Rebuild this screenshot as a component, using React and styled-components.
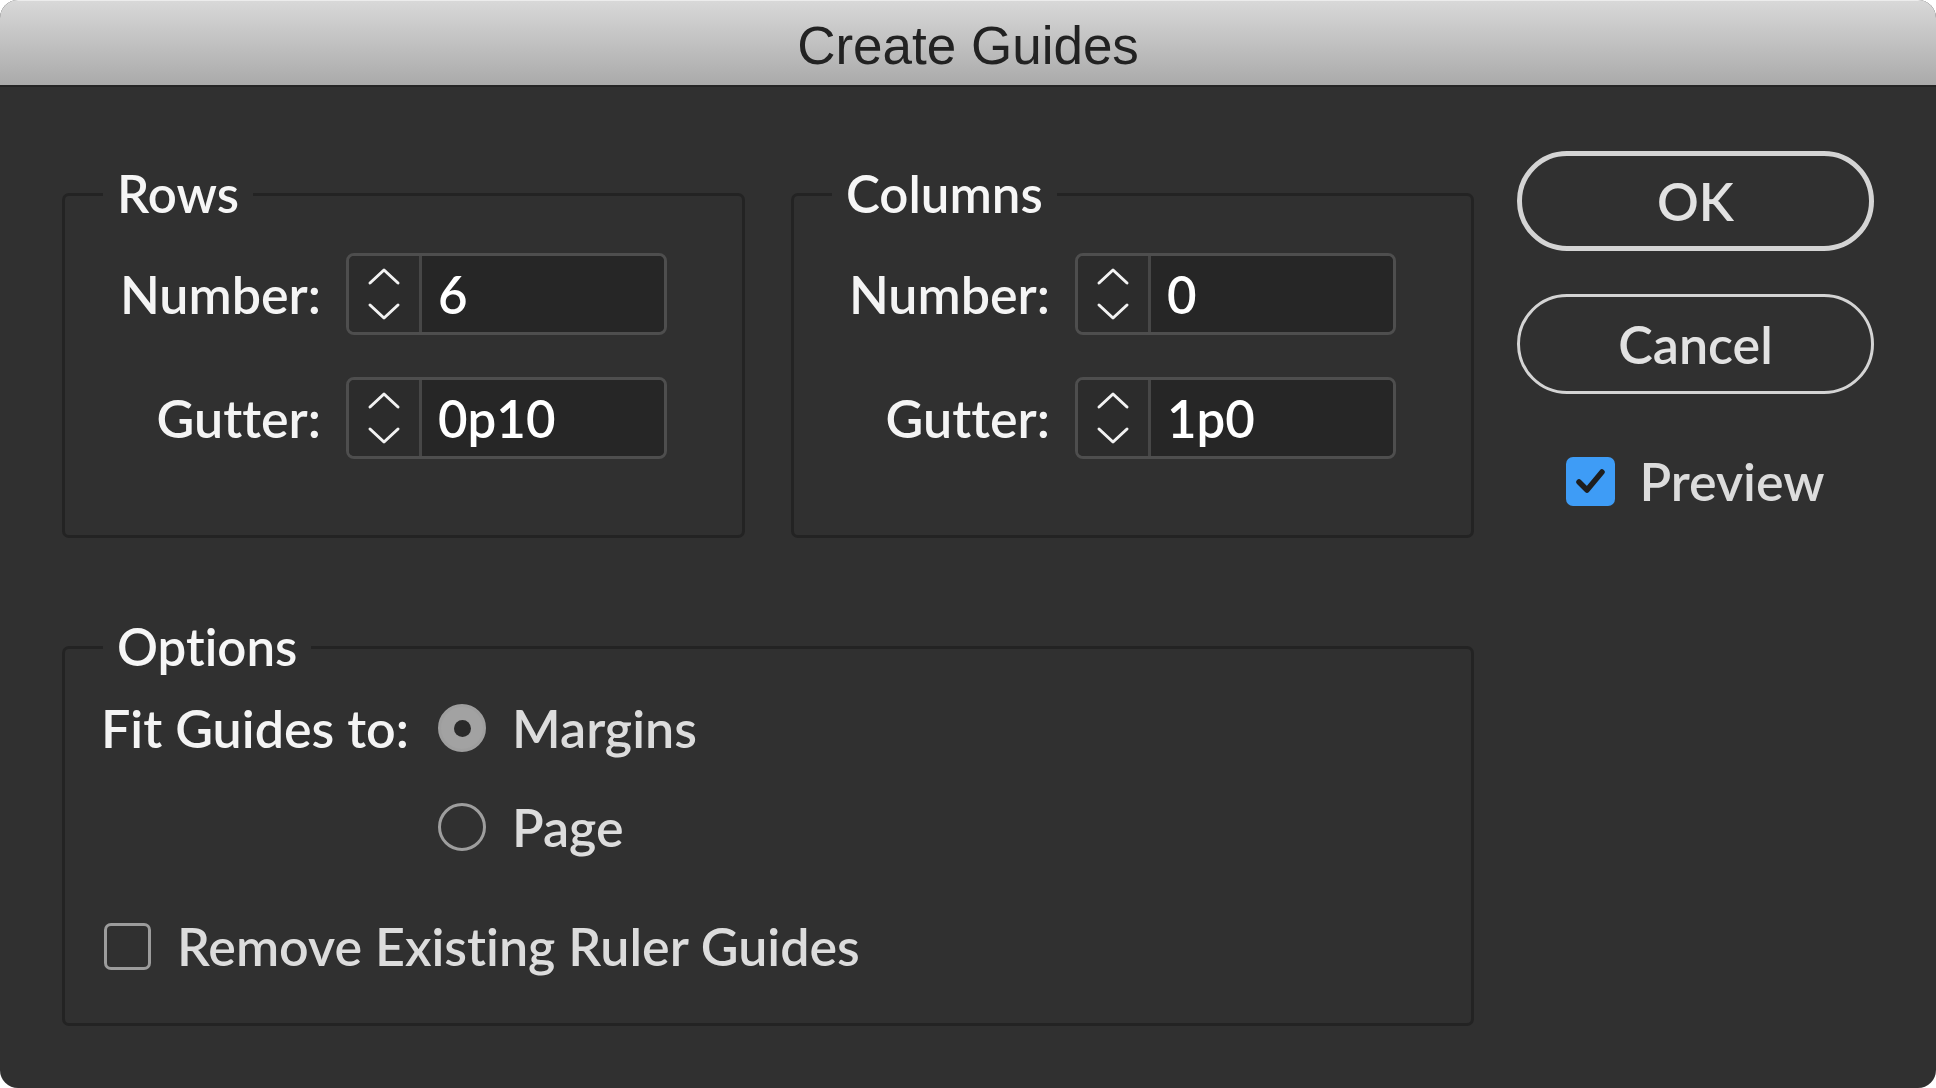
import React from 'react'
import styled, { createGlobalStyle } from 'styled-components'

const GlobalStyle = createGlobalStyle`
  html, body {
    margin: 0;
    padding: 0;
    background: #ffffff;
  }
  #root {
    width: 1936px;
    height: 1088px;
  }
`

const Window = styled.div`
  width: 1936px;
  height: 1088px;
  border-radius: 18px;
  overflow: hidden;
  background: #303030;
  display: flex;
  flex-direction: column;
  font-family: Lato, "Open Sans", sans-serif;
  font-variant-ligatures: none;
`

const TitleBar = styled.div`
  height: 87px;
  box-sizing: border-box;
  flex-shrink: 0;
  padding-top: 5px;
  background: linear-gradient(#d8d8d8, #aaaaaa);
  border-top: 1px solid #ececec;
  border-bottom: 2px solid #252525;
  display: flex;
  align-items: center;
  justify-content: center;
  font-family: "Liberation Sans", Arial, sans-serif;
  font-size: 53px;
  color: #222222;
`

const Body = styled.div`
  flex: 1;
  display: grid;
  grid-template-columns: 1412px 357px;
  column-gap: 43px;
  padding: 64px 62px 0 62px;
  align-items: start;
`

const LeftColumn = styled.div`
  padding-top: 18px;
  display: flex;
  flex-direction: column;
  gap: 84px;
`

const TopGroups = styled.div`
  display: grid;
  grid-template-columns: 1fr 1fr;
  column-gap: 46px;
`

const Group = styled.fieldset`
  margin: 0;
  min-width: 0;
  padding: ${p => p.$pad};
  border: 3px solid #232323;
  border-radius: 7px;
`

const Legend = styled.legend`
  margin-left: 38px;
  padding: 0 14px;
  font-size: 51px;
  line-height: 50px;
  font-weight: 600;
  color: #f6f6f6;
`

const FieldGrid = styled.div`
  display: grid;
  grid-template-columns: 256px 321px;
  column-gap: 25px;
  row-gap: 42px;
  align-items: center;
`

const Label = styled.div`
  text-align: ${p => (p.$left ? 'left' : 'right')};
  font-size: 52px;
  font-weight: 600;
  color: #f4f4f4;
  white-space: nowrap;
`

const Spinner = styled.div`
  display: flex;
  height: 82px;
  box-sizing: border-box;
  border: 3px solid #4e4e4e;
  border-radius: 8px;
  overflow: hidden;
`

const Arrows = styled.div`
  width: 70px;
  flex-shrink: 0;
  background: #2c2c2c;
  border-right: 3px solid #474747;
  display: flex;
  align-items: center;
  justify-content: center;
`

const Value = styled.div`
  flex: 1;
  background: #262626;
  padding-left: 16px;
  display: flex;
  align-items: center;
  font-size: 51px;
  font-weight: 600;
  color: #ffffff;
`

const OptionsGrid = styled.div`
  display: grid;
  padding-left: 36px;
  grid-template-columns: 337px auto;
  grid-template-rows: 50px 50px 70px;
  row-gap: 49px;
  align-items: center;
  justify-items: start;
`

const RadioItem = styled.div`
  grid-column: 2;
  display: flex;
  align-items: center;
  gap: 26px;
`

const Radio = styled.span`
  width: 48px;
  height: 48px;
  box-sizing: border-box;
  border-radius: 50%;
  display: flex;
  align-items: center;
  justify-content: center;
  background: ${p => (p.$checked ? '#a2a2a2' : 'transparent')};
  border: 3px solid #9e9e9e;

  &::after {
    content: '';
    width: 17px;
    height: 17px;
    border-radius: 50%;
    background: #2a2a2a;
    display: ${p => (p.$checked ? 'block' : 'none')};
  }
`

const OptionText = styled.span`
  font-size: 52px;
  font-weight: 600;
  color: #dcdcdc;
  white-space: nowrap;
`

const CheckRow = styled.div`
  grid-column: 1 / span 2;
  align-self: end;
  height: 50px;
  margin-left: 3px;
  display: flex;
  align-items: center;
  gap: 26px;
`

const CheckBox = styled.span`
  width: ${p => p.$size}px;
  height: ${p => p.$size}px;
  box-sizing: border-box;
  border-radius: 7px;
  flex-shrink: 0;
  display: flex;
  align-items: center;
  justify-content: center;
  background: ${p => (p.$checked ? '#3e9cf6' : 'transparent')};
  border: ${p => (p.$checked ? 'none' : '3px solid #9c9c9c')};
`

const RightColumn = styled.div`
  display: flex;
  flex-direction: column;
`

const PillButton = styled.button`
  height: 100px;
  box-sizing: border-box;
  margin-top: ${p => (p.$primary ? '0' : '43px')};
  border-radius: 50px;
  border: ${p => (p.$primary ? '5px' : '3px')} solid #d4d4d4;
  background: transparent;
  color: #e2e2e2;
  font-family: Lato, "Open Sans", sans-serif;
  font-size: 52px;
  font-weight: 600;
  padding: 0;
`

const PreviewRow = styled.div`
  margin-top: 56px;
  display: flex;
  align-items: center;
  justify-content: center;
  gap: 24px;
`

const Chevrons = () => (
  <svg width="34" height="60" viewBox="0 0 34 60" fill="none" stroke="#f2f2f2" strokeWidth="3" strokeLinecap="round" strokeLinejoin="round">
    <path d="M3 19 L17 6 L31 19" />
    <path d="M3 41 L17 54 L31 41" />
  </svg>
)

const CheckMark = () => (
  <svg width="49" height="49" viewBox="0 0 49 49" fill="none" stroke="#1e1e1e" strokeWidth="5.5" strokeLinecap="round" strokeLinejoin="round">
    <path d="M13 25 L21 33 L36 15" />
  </svg>
)

const Field = ({ label, value }) => (
  <>
    <Label>{label}</Label>
    <Spinner>
      <Arrows><Chevrons /></Arrows>
      <Value>{value}</Value>
    </Spinner>
  </>
)

const FieldGroup = ({ title, number, gutter }) => (
  <Group $pad="34px 0 76px 0">
    <Legend>{title}</Legend>
    <FieldGrid>
      <Field label="Number:" value={number} />
      <Field label="Gutter:" value={gutter} />
    </FieldGrid>
  </Group>
)

export default function App() {
  return (
    <>
      <GlobalStyle />
      <Window>
        <TitleBar>Create Guides</TitleBar>
        <Body>
          <LeftColumn>
            <TopGroups>
              <FieldGroup title="Rows" number="6" gutter="0p10" />
              <FieldGroup title="Columns" number="0" gutter="1p0" />
            </TopGroups>
            <Group $pad="31px 0 52px 0">
              <Legend>Options</Legend>
              <OptionsGrid>
                <Label $left style={{ gridColumn: 1, gridRow: 1 }}>Fit Guides to:</Label>
                <RadioItem>
                  <Radio $checked />
                  <OptionText>Margins</OptionText>
                </RadioItem>
                <RadioItem>
                  <Radio />
                  <OptionText>Page</OptionText>
                </RadioItem>
                <CheckRow>
                  <CheckBox $size={47} />
                  <OptionText>Remove Existing Ruler Guides</OptionText>
                </CheckRow>
              </OptionsGrid>
            </Group>
          </LeftColumn>
          <RightColumn>
            <PillButton $primary>OK</PillButton>
            <PillButton>Cancel</PillButton>
            <PreviewRow>
              <CheckBox $size={49} $checked><CheckMark /></CheckBox>
              <OptionText>Preview</OptionText>
            </PreviewRow>
          </RightColumn>
        </Body>
      </Window>
    </>
  )
}
